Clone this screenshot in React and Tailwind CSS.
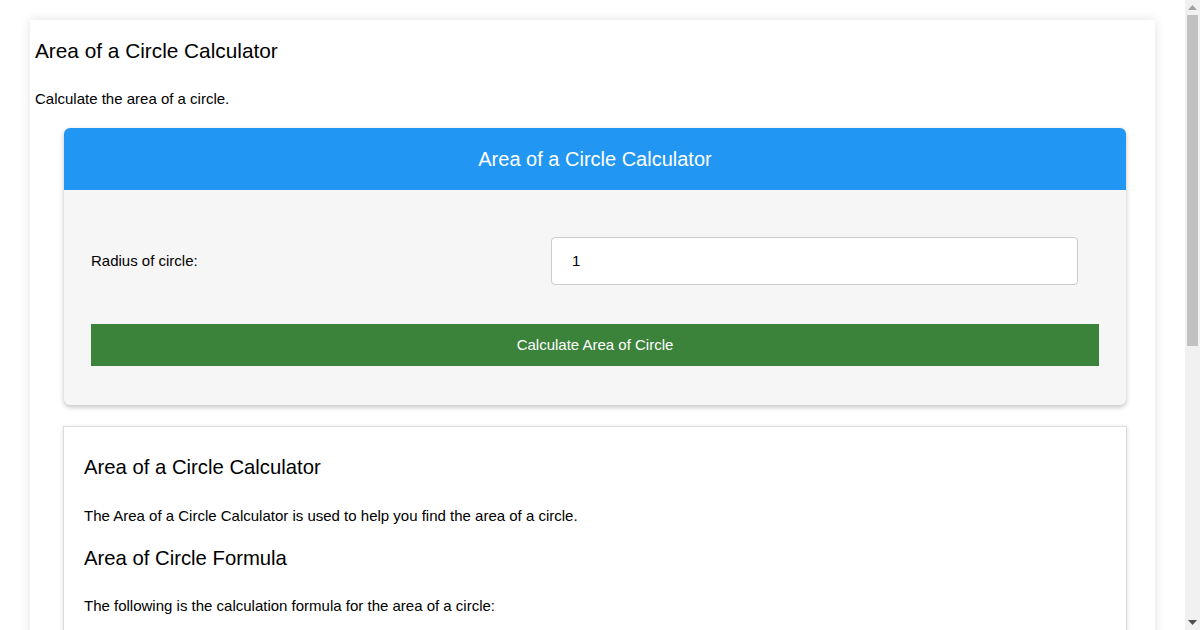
import React from "react";

function Scrollbar() {
  return (
    <div className="flex h-full w-[15px] shrink-0 flex-col bg-[#f1f1f1]">
      <div className="flex h-[15px] items-center justify-center">
        <svg width="9" height="5" viewBox="0 0 9 5">
          <path d="M0 5 L4.5 0 L9 5 Z" fill="#a3a3a3" />
        </svg>
      </div>
      <div className="mx-[2px] h-[331px] bg-[#c1c1c1]" />
      <div className="flex-1" />
      <div className="flex h-[15px] items-center justify-center">
        <svg width="9" height="5" viewBox="0 0 9 5">
          <path d="M0 0 L9 0 L4.5 5 Z" fill="#505050" />
        </svg>
      </div>
    </div>
  );
}

export default function App() {
  return (
    <div className="flex h-screen overflow-hidden bg-white font-['Liberation_Sans',Arial,sans-serif] text-black">
      <div className="min-w-0 flex-1 px-[30px] pt-[20px]">
        <div className="bg-white px-[5px] pt-[18px] pb-[40px] shadow-[0_0_10px_rgba(0,0,0,0.12)]">
          {/* Page heading */}
          <h1 className="pt-[1px] text-[20.8px] leading-[24px] font-normal">Area of a Circle Calculator</h1>
          <p className="mt-[26px] text-[15px] leading-[20px]">Calculate the area of a circle.</p>

          {/* Calculator card */}
          <div className="mt-[19px] ml-[29px] mr-[24px] rounded-[6px] bg-[#f6f6f6] shadow-[0_2px_5px_rgba(0,0,0,0.25)]">
            <div className="flex h-[62px] items-center justify-center rounded-t-[6px] bg-[#2196f3] text-[20px] text-white">
              Area of a Circle Calculator
            </div>
            <div className="px-[27px] pt-[47px] pb-[39px]">
              <div className="flex items-center justify-between">
                <label className="text-[15px]">Radius of circle:</label>
                <input
                  type="text"
                  defaultValue="1"
                  className="mr-[21px] h-[48px] w-[527px] rounded-[4px] border border-[#cccccc] bg-white px-[20px] pb-[1px] text-[15px] outline-none"
                />
              </div>
              <button className="mt-[39px] h-[42px] w-full bg-[#3b833a] text-[15px] text-white">
                Calculate Area of Circle
              </button>
            </div>
          </div>

          {/* Info card */}
          <div className="mt-[21px] ml-[28px] mr-[23px] border border-[#dddddd] bg-white px-[20px] pt-[28px] pb-[60px] shadow-[0_1px_4px_rgba(0,0,0,0.15)]">
            <h2 className="text-[20.3px] leading-[24px] font-normal">Area of a Circle Calculator</h2>
            <p className="mt-[27px] text-[15px] leading-[20px]">
              The Area of a Circle Calculator is used to help you find the area of a circle.
            </p>
            <h2 className="mt-[20px] text-[20.3px] leading-[24px] font-normal">Area of Circle Formula</h2>
            <p className="mt-[26px] text-[15px] leading-[20px]">
              The following is the calculation formula for the area of a circle:
            </p>
          </div>
        </div>
      </div>
      <Scrollbar />
    </div>
  );
}
